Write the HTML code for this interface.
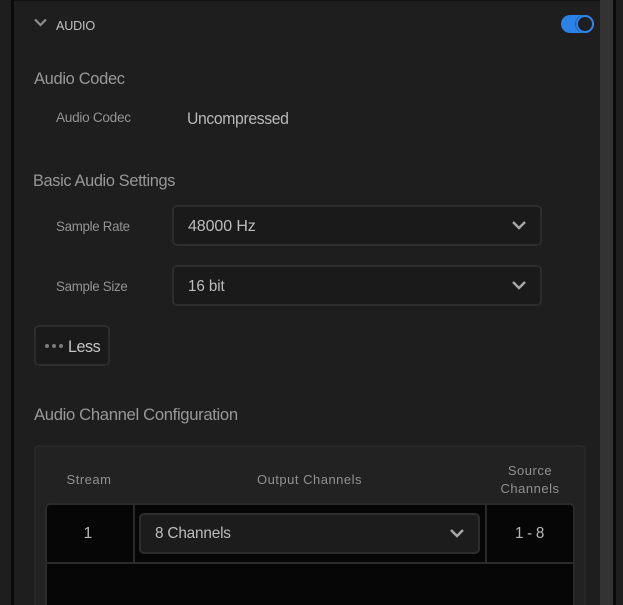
<!DOCTYPE html>
<html style="overflow:hidden;height:605px"><head><meta charset="utf-8"><style>
html,body{margin:0;padding:0;background:#1e1e1e}
body{width:623px;height:605px;overflow:hidden;position:relative;font-family:"Liberation Sans",sans-serif}
div,svg{position:absolute;box-sizing:border-box}
.t{white-space:nowrap;line-height:20px;height:20px;transform-origin:0 50%}
.dd{background:#1a1a1a;border:2px solid #2d2d2d;border-radius:5px}
.h{color:#989898;font-size:17px;letter-spacing:-.35px}
.l{color:#939393;font-size:14px;letter-spacing:-.3px}
.v{color:#bcbcbc;font-size:16px;letter-spacing:-.1px}
.c{color:#909090;font-size:13px;letter-spacing:.5px;text-align:center}
</style></head><body>
<div style="left:0;top:0;width:623px;height:605px;background:#1e1e1e"></div>
<div style="left:11px;top:0;width:3px;height:605px;background:#0a0a0a"></div>
<div style="left:14px;top:0;width:586px;height:1px;background:#111"></div>
<div style="left:600px;top:0;width:13px;height:605px;background:#333"></div>
<div style="left:613px;top:0;width:3px;height:605px;background:#0a0a0a"></div>
<svg style="left:33px;top:17px" width="15" height="11" viewBox="0 0 15 11"><path d="M2 2.5L7.5 8L13 2.5" fill="none" stroke="#8e8e8e" stroke-width="2.2"/></svg>
<div class="t" style="left:56px;top:16px;color:#c0c0c0;font-size:13px;letter-spacing:-.2px;transform:scaleX(.97)">AUDIO</div>
<div style="left:561px;top:15px;width:33px;height:18px;background:#2d82e8;border-radius:9px"></div>
<div style="left:576px;top:15px;width:18px;height:18px;background:#1e1e1e;border:2px solid #2d82e8;border-radius:50%;box-shadow:-1px 0 0 #1c5fb0"></div>
<div class="t h" style="left:34px;top:69px;transform:scaleX(.97)">Audio Codec</div>
<div class="t l" style="left:56px;top:108px;font-size:13.5px;transform:scaleX(1.01)">Audio Codec</div>
<div class="t" style="left:187px;top:109px;color:#b8b8b8;font-size:17px;letter-spacing:-.4px;transform:scaleX(.927)">Uncompressed</div>
<div class="t h" style="left:33px;top:171px;transform:scaleX(.96)">Basic Audio Settings</div>
<div class="t l" style="left:56px;top:216px;transform:scaleX(.95)">Sample Rate</div>
<div class="dd" style="left:172px;top:205px;width:370px;height:41px"></div>
<div class="t v" style="left:188px;top:217px">48000 Hz</div>
<svg style="left:511px;top:219px" width="16" height="12" viewBox="0 0 16 12"><path d="M2 3L8 9L14 3" fill="none" stroke="#a8a8a8" stroke-width="2.4"/></svg>
<div class="t l" style="left:56px;top:276px;transform:scaleX(.95)">Sample Size</div>
<div class="dd" style="left:172px;top:265px;width:370px;height:41px"></div>
<div class="t v" style="left:188px;top:277px;transform:scaleX(.95)">16 bit</div>
<svg style="left:511px;top:279px" width="16" height="12" viewBox="0 0 16 12"><path d="M2 3L8 9L14 3" fill="none" stroke="#a8a8a8" stroke-width="2.4"/></svg>
<div class="dd" style="left:34px;top:325px;width:76px;height:41px"></div>
<div style="left:45px;top:344px;width:4px;height:4px;border-radius:50%;background:#7c7c7c"></div>
<div style="left:52px;top:344px;width:4px;height:4px;border-radius:50%;background:#7c7c7c"></div>
<div style="left:59px;top:344px;width:4px;height:4px;border-radius:50%;background:#7c7c7c"></div>
<div class="t" style="left:68px;top:337px;color:#c4c4c4;font-size:17px;letter-spacing:-.5px;transform:scaleX(.95)">Less</div>
<div class="t h" style="left:34px;top:405px;transform:scaleX(.98)">Audio Channel Configuration</div>
<div style="left:34px;top:445px;width:552px;height:160px;background:#222;border:2px solid #272727;border-bottom:0;border-radius:5px 5px 0 0"></div>
<div class="t c" style="left:46px;top:470px;width:86px">Stream</div>
<div class="t c" style="left:134px;top:470px;width:351px">Output Channels</div>
<div class="t c" style="left:486px;top:461px;width:88px">Source</div>
<div class="t c" style="left:486px;top:479px;width:88px">Channels</div>
<div style="left:45px;top:503px;width:530px;height:102px;background:#060606;border:2px solid #2b2b2b;border-bottom:0;border-radius:5px 5px 0 0"></div>
<div style="left:133px;top:504px;width:2px;height:59px;background:#2b2b2b"></div>
<div style="left:485px;top:504px;width:2px;height:59px;background:#2b2b2b"></div>
<div style="left:46px;top:562px;width:528px;height:2px;background:#2b2b2b"></div>
<div class="t" style="left:45px;top:524px;width:86px;text-align:center;color:#b8b8b8;font-size:16px">1</div>
<div class="dd" style="left:139px;top:513px;width:341px;height:41px;background:#1c1c1c"></div>
<div class="t v" style="left:155px;top:524px;letter-spacing:-.2px;transform:scaleX(.96)">8 Channels</div>
<svg style="left:449px;top:527px" width="16" height="12" viewBox="0 0 16 12"><path d="M2 3L8 9L14 3" fill="none" stroke="#a8a8a8" stroke-width="2.4"/></svg>
<div class="t" style="left:515px;top:524px;color:#b8b8b8;font-size:16px;letter-spacing:-.3px;transform:scaleX(.95)">1 - 8</div>
</body></html>
